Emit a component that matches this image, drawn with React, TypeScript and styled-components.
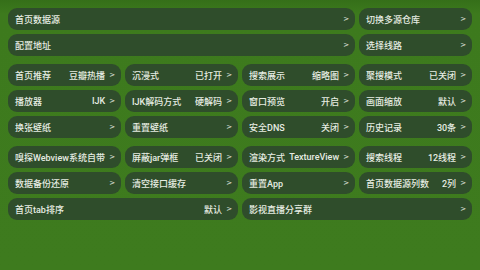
import React from "react";
import styled, { createGlobalStyle } from "styled-components";

const GlobalStyle = createGlobalStyle`
  html, body {
    margin: 0;
    padding: 0;
    width: 480px;
    height: 270px;
    overflow: hidden;
    background: #3d7a1d;
  }
  body {
    font-family: Roboto, "Noto Sans CJK SC", sans-serif;
  }
`;

const Page = styled.div`
  width: 480px;
  height: 270px;
  box-sizing: border-box;
  padding: 8px 8px 0 8px;
  background: linear-gradient(#356f19 0px, #3d7a1d 14px, #3e7b1e 100%);
  display: flex;
  flex-direction: column;
  gap: 8px;
`;

const Section = styled.div`
  display: grid;
  grid-template-columns: repeat(4, minmax(0, 1fr));
  gap: 4px;
`;

const Item = styled.div<{ $span?: number }>`
  grid-column: span ${(p) => p.$span ?? 1};
  height: 22px;
  box-sizing: border-box;
  padding: 0 6px 0 7px;
  border-radius: 9px;
  background: #2f4d2b;
  color: #e6ece2;
  font-size: 9px;
  font-weight: 500;
  display: flex;
  align-items: center;
  white-space: nowrap;
  min-width: 0;
`;

const Label = styled.span`
  flex: 1 1 auto;
`;

const Value = styled.span`
  margin-left: 3px;
`;

const Chevron = styled.span`
  margin-left: 4px;
  font-family: "DejaVu Sans", sans-serif;
  font-size: 7px;
`;

type Entry = { label: string; value?: string; span?: number };

const sections: Entry[][] = [
  [
    { label: "首页数据源", span: 3 },
    { label: "切换多源仓库" },
    { label: "配置地址", span: 3 },
    { label: "选择线路" },
  ],
  [
    { label: "首页推荐", value: "豆瓣热播" },
    { label: "沉浸式", value: "已打开" },
    { label: "搜索展示", value: "缩略图" },
    { label: "聚搜模式", value: "已关闭" },
    { label: "播放器", value: "IJK" },
    { label: "IJK解码方式", value: "硬解码" },
    { label: "窗口预览", value: "开启" },
    { label: "画面缩放", value: "默认" },
    { label: "换张壁纸" },
    { label: "重置壁纸" },
    { label: "安全DNS", value: "关闭" },
    { label: "历史记录", value: "30条" },
  ],
  [
    { label: "嗅探Webview系统自带" },
    { label: "屏蔽jar弹框", value: "已关闭" },
    { label: "渲染方式", value: "TextureView" },
    { label: "搜索线程", value: "12线程" },
    { label: "数据备份还原" },
    { label: "清空接口缓存" },
    { label: "重置App" },
    { label: "首页数据源列数", value: "2列" },
    { label: "首页tab排序", value: "默认", span: 2 },
    { label: "影视直播分享群", span: 2 },
  ],
];

const App: React.FC = () => {
  return (
    <>
      <GlobalStyle />
      <Page>
        {sections.map((items, i) => (
          <Section key={i}>
            {items.map((it) => (
              <Item key={it.label} $span={it.span}>
                <Label>{it.label}</Label>
                {it.value && <Value>{it.value}</Value>}
                <Chevron>&gt;</Chevron>
              </Item>
            ))}
          </Section>
        ))}
      </Page>
    </>
  );
};

export default App;
